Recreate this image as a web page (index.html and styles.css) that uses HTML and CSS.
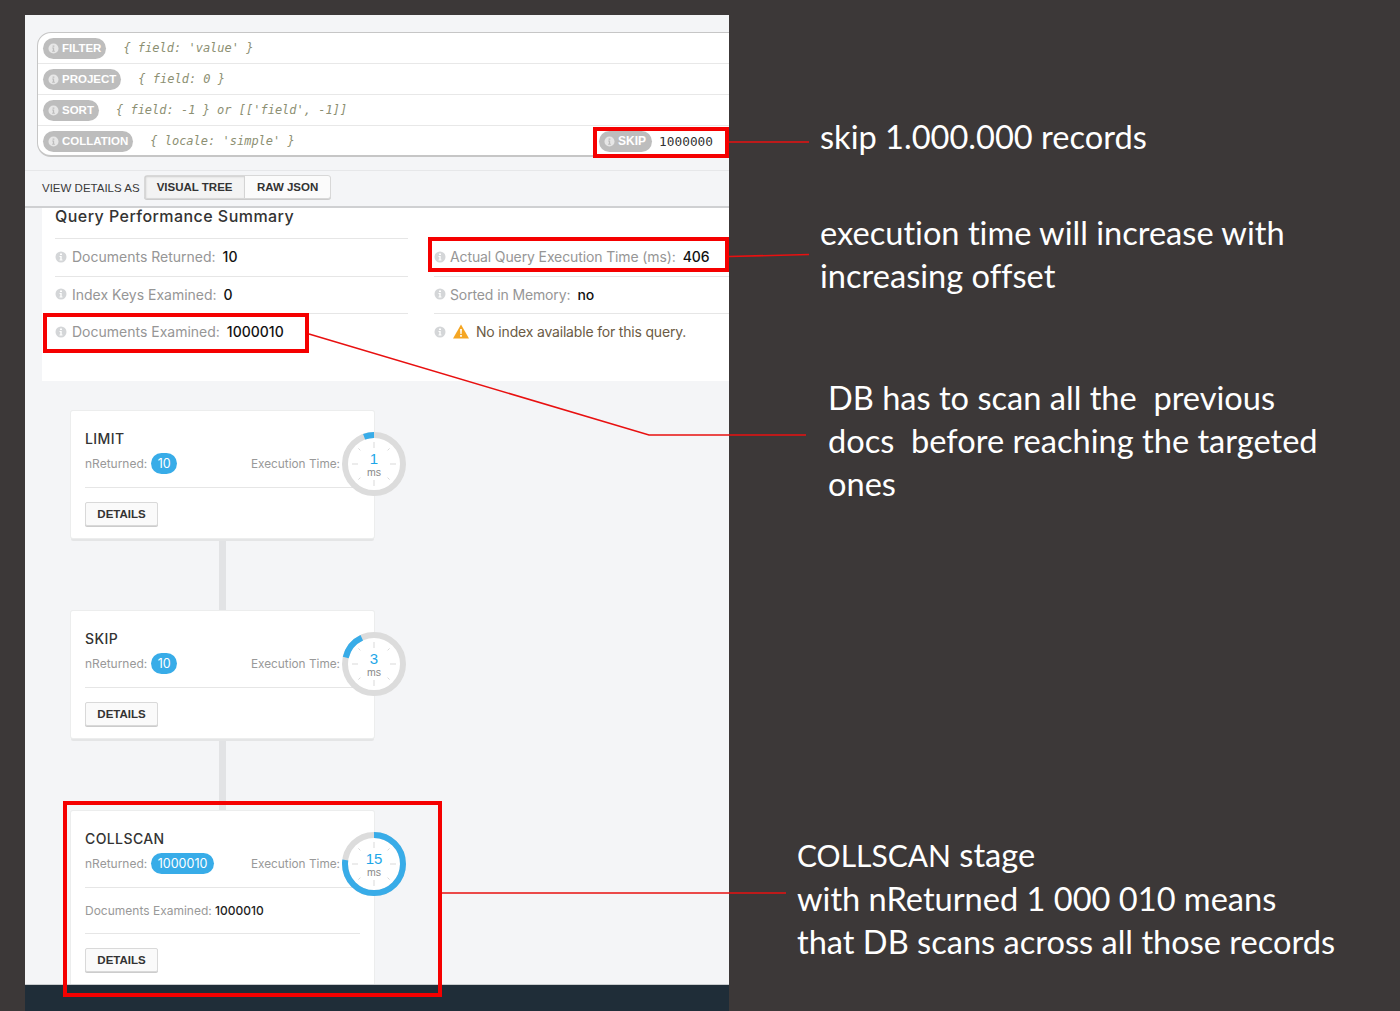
FILE: index.html
```html
<!DOCTYPE html>
<html lang="en">
<head>
<meta charset="utf-8">
<title>Query explain plan</title>
<link rel="stylesheet" href="styles.css">
</head>
<body>
<svg class="defs" width="0" height="0" aria-hidden="true">
  <symbol id="info" viewBox="0 0 12 12">
    <path fill-rule="evenodd" d="M6 .5a5.500 5.500 0 1 1 0 11a5.500 5.500 0 0 1 0-11zM5 2.600v1.500h2V2.600zM4.500 5v1h.8v2.500h-.8v1h3v-1h-.8V5z"/>
  </symbol>
</svg>
<main class="panel">
  <section class="query">
    <div class="qrow"><span class="pill"><svg class="ico"><use href="#info"/></svg>FILTER</span><code class="code">{ field: 'value' }</code></div>
    <div class="qrow"><span class="pill"><svg class="ico"><use href="#info"/></svg>PROJECT</span><code class="code">{ field: 0 }</code></div>
    <div class="qrow"><span class="pill"><svg class="ico"><use href="#info"/></svg>SORT</span><code class="code">{ field: -1 } or [['field', -1]]</code></div>
    <div class="qrow"><span class="pill"><svg class="ico"><use href="#info"/></svg>COLLATION</span><code class="code">{ locale: 'simple' }</code>
      <span class="skip"><span class="pill"><svg class="ico"><use href="#info"/></svg>SKIP</span><code class="skipval">1000000</code></span>
    </div>
  </section>
  <section class="viewbar">
    <span class="viewlabel">VIEW DETAILS AS</span>
    <div class="btngroup"><span class="vbtn active">VISUAL TREE</span><span class="vbtn">RAW JSON</span></div>
  </section>
  <section class="summary">
    <h2 class="sumtitle">Query Performance Summary</h2>
    <div class="sumgrid">
      <div class="sumcol leftcol">
        <div class="stat"><svg class="sico"><use href="#info"/></svg><span class="slabel">Documents Returned:</span><b class="sval">10</b></div>
        <div class="stat"><svg class="sico"><use href="#info"/></svg><span class="slabel">Index Keys Examined:</span><b class="sval">0</b></div>
        <div class="stat"><svg class="sico"><use href="#info"/></svg><span class="slabel">Documents Examined:</span><b class="sval">1000010</b></div>
      </div>
      <div class="sumcol rightcol">
        <div class="stat"><svg class="sico"><use href="#info"/></svg><span class="slabel">Actual Query Execution Time (ms):</span><b class="sval">406</b></div>
        <div class="stat"><svg class="sico"><use href="#info"/></svg><span class="slabel">Sorted in Memory:</span><b class="sval">no</b></div>
        <div class="stat"><svg class="sico"><use href="#info"/></svg>
          <svg class="warn" viewBox="0 0 16 15"><path fill="#f5a623" d="M8 .5 16 14.500H0z"/><path fill="#fff" d="M7.100 5h1.800l-.3 5H7.400zM7.100 11h1.800v1.800H7.100z"/></svg>
          <span class="notice">No index available for this query.</span></div>
      </div>
    </div>
  </section>
  <section class="tree">
    <article class="card">
      <h3 class="ctitle">LIMIT</h3>
      <div class="cmeta"><span class="clabel">nReturned:</span><span class="badge">10</span><span class="clabel etime">Execution Time:</span></div>
      <div class="cfoot"><span class="dbtn">DETAILS</span></div>
      <div class="gauge">
        <svg viewBox="0 0 66 66" width="66" height="66">
          <circle class="gbase" cx="33" cy="33" r="29"/>
          <circle class="garc" cx="33" cy="33" r="29" pathLength="360" stroke-dasharray="20 340" stroke-dashoffset="20" transform="rotate(-90 33 33)"/>
          <path class="gticks" d="M33 11v6M33 49v6M11 33h6M49 33h6M17.400 17.400l2 2M48.600 17.400l-2 2M17.400 48.600l2-2M48.600 48.600l-2-2"/>
        </svg>
        <div class="gtext"><span class="gnum">1</span><span class="gunit">ms</span></div>
      </div>
    </article>
    <div class="link"></div>
    <article class="card">
      <h3 class="ctitle">SKIP</h3>
      <div class="cmeta"><span class="clabel">nReturned:</span><span class="badge">10</span><span class="clabel etime">Execution Time:</span></div>
      <div class="cfoot"><span class="dbtn">DETAILS</span></div>
      <div class="gauge">
        <svg viewBox="0 0 66 66" width="66" height="66">
          <circle class="gbase" cx="33" cy="33" r="29"/>
          <circle class="garc" cx="33" cy="33" r="29" pathLength="360" stroke-dasharray="52 308" stroke-dashoffset="-283" transform="rotate(-90 33 33)"/>
          <path class="gticks" d="M33 11v6M33 49v6M11 33h6M49 33h6M17.400 17.400l2 2M48.600 17.400l-2 2M17.400 48.600l2-2M48.600 48.600l-2-2"/>
        </svg>
        <div class="gtext"><span class="gnum">3</span><span class="gunit">ms</span></div>
      </div>
    </article>
    <div class="link"></div>
    <article class="card lastcard">
      <h3 class="ctitle">COLLSCAN</h3>
      <div class="cmeta"><span class="clabel">nReturned:</span><span class="badge">1000010</span><span class="clabel etime">Execution Time:</span></div>
      <div class="cextra"><span class="clabel">Documents Examined:</span> <b class="cval">1000010</b></div>
      <div class="cfoot"><span class="dbtn">DETAILS</span></div>
      <div class="gauge">
        <svg viewBox="0 0 66 66" width="66" height="66">
          <circle class="gbase" cx="33" cy="33" r="29"/>
          <circle class="garc" cx="33" cy="33" r="29" pathLength="360" stroke-dasharray="278 82" transform="rotate(-90 33 33)"/>
          <path class="gticks" d="M33 11v6M33 49v6M11 33h6M49 33h6M17.400 17.400l2 2M48.600 17.400l-2 2M17.400 48.600l2-2M48.600 48.600l-2-2"/>
        </svg>
        <div class="gtext"><span class="gnum">15</span><span class="gunit">ms</span></div>
      </div>
    </article>
  </section>
  <footer class="pfoot"></footer>
</main>

<div class="mark mark-skip"></div>
<div class="mark mark-time"></div>
<div class="mark mark-docs"></div>
<div class="mark mark-scan"></div>
<svg class="leaders" width="1400" height="1011" viewBox="0 0 1400 1011" aria-hidden="true">
  <path d="M729 142H809M729 256.500L809 254.500M309 334L649 435H806M442 893H786"/>
</svg>
<p class="note note-a">skip 1.000.000 records</p>
<p class="note note-b">execution time will increase with<br>increasing offset</p>
<p class="note note-c">DB has to scan all the&nbsp; previous<br>docs&nbsp; before reaching the targeted<br>ones</p>
<p class="note note-d"><span class="caps">COLLSCAN</span> stage<br>with nReturned 1 000 010 means<br>that DB scans across all those records</p>
</body>
</html>
```
FILE: styles.css
```css
* { box-sizing: border-box; }
html, body { margin: 0; height: 1011px; overflow: hidden; }
body {
  background: #3c3838;
  padding: 15px 0 0 25px;
  font-family: Inter, "Liberation Sans", sans-serif;
  position: relative;
}
.defs { position: absolute; }
.panel {
  width: 704px;
  height: 996px;
  background: #f4f5f7;
  display: flex;
  flex-direction: column;
  overflow: hidden;
}

/* query bar */
.query {
  flex: none;
  width: 730px;
  height: 125px;
  margin: 17px 0 0 12px;
  background: #fff;
  border: 1px solid #c6c6c6;
  border-bottom-width: 2px;
  border-radius: 14px;
}
.qrow {
  height: 31px;
  display: flex;
  align-items: center;
  padding-left: 5px;
  border-bottom: 1px solid #e8e8e8;
}
.qrow:last-child { border-bottom: 0; padding-bottom: 1px; }
.pill {
  display: inline-flex;
  align-items: center;
  height: 21px;
  padding: 0 5px;
  border-radius: 11px;
  background: #bdbdbd;
  color: #fff;
  font-family: "Liberation Sans", sans-serif;
  font-size: 11.500px;
  font-weight: 700;
}
.ico { width: 11px; height: 11px; margin-right: 3px; fill: #e6e6e6; }
.code {
  margin-left: 17px;
  font: italic 12px "DejaVu Sans Mono", monospace;
  color: #8c8f72;
}
.skip {
  margin-left: auto;
  margin-right: 53px;
  display: flex;
  align-items: center;
  gap: 7px;
}
.skip .pill { font-size: 12px; padding: 0 6px 0 5px; }
.skipval { font: 12.800px "DejaVu Sans Mono", monospace; color: #333; }

/* view toggle */
.viewbar {
  flex: none;
  height: 38px;
  margin-top: 13px;
  padding-left: 17px;
  display: flex;
  align-items: center;
  gap: 4px;
  border-top: 1px solid #e6e7e9;
  border-bottom: 2px solid #cfd0d2;
}
.viewlabel { margin-top: -2px; font: 11.500px "Liberation Sans", sans-serif; color: #3a3a3a; }
.btngroup { display: flex; height: 24px; margin-top: -3px; border: 1px solid #d8d8d8; border-radius: 3px; background: #fbfbfb; box-shadow: 0 1px 0 #ccc; }
.vbtn {
  display: flex;
  align-items: center;
  justify-content: center;
  width: 85px;
  padding-left: 1px;
  color: #333;
  font: 700 11.500px "Liberation Sans", sans-serif;
}
.vbtn.active { width: 100px; background: #f3f3f3; border-right: 1px solid #d4d4d4; box-shadow: inset 1px 1px 2px #ccc; }

/* summary */
.summary {
  flex: none;
  height: 173px;
  margin-left: 17px;
  padding-left: 13px;
  background: #fff;
}
.sumtitle {
  margin: 0;
  height: 30px;
  font-size: 16px;
  font-weight: 500;
  line-height: 16px;
  letter-spacing: .45px;
  color: #333;
}
.sumgrid { display: grid; grid-template-columns: 353px 1fr; column-gap: 26px; }
.stat {
  height: 37.500px;
  padding-bottom: 1px;
  display: flex;
  align-items: center;
  border-top: 1px solid #e6e6e6;
  font-size: 14px;
  white-space: nowrap;
}
.sico { width: 12px; height: 12px; margin-right: 5px; fill: #d4d6d8; flex: none; }
.slabel { color: #969696; }
.sval { margin-left: 7px; font-weight: 500; color: #111; }
.rightcol .sico { margin-right: 4px; }
.rightcol .slabel { letter-spacing: -.12px; }
.notice { letter-spacing: -.18px; }
.warn { width: 16px; height: 15px; margin: 0 7px 0 3px; }
.notice { color: #6b5b45; }

/* stage tree */
.tree {
  flex: 1;
  min-height: 0;
  padding: 30px 0 0 46px;
  overflow: hidden;
}
.card {
  position: relative;
  width: 303px;
  height: 127px;
  padding: 18px 14px 0;
  background: #fff;
  border-radius: 2px;
  box-shadow: 0 0 0 1px #eceded, 0 3px 0 #e4e5e6;
}
.lastcard { height: 190px; }
.ctitle { margin: 0; font-size: 14px; font-weight: 500; line-height: 20px; letter-spacing: .4px; color: #333; }
.cmeta { display: flex; align-items: center; height: 26px; margin-top: 2px; padding-bottom: 1px; }
.clabel { font-size: 12px; color: #999; }
.badge {
  margin-left: 4px;
  padding: 0 6.500px;
  height: 21px;
  line-height: 21px;
  border-radius: 11px;
  background: #38ace8;
  color: #fff;
  font-size: 12.500px;
}
.etime { margin-left: auto; margin-right: 20px; font-size: 11.800px; }
.cfoot { margin-top: 10px; padding-top: 14px; border-top: 1px solid #e6e6e6; }
.cextra { margin-top: 10px; height: 46px; padding-top: 15px; border-top: 1px solid #e6e6e6; font-size: 12px; }
.cextra + .cfoot { margin-top: 0; }
.cval { font-weight: 500; color: #222; }
.dbtn {
  display: inline-flex;
  align-items: center;
  justify-content: center;
  width: 73px;
  height: 24px;
  border: 1px solid #d9d9d9;
  border-radius: 2px;
  box-shadow: 0 1px 0 #ccc;
  background: #fafafa;
  color: #333;
  font: 700 11.500px "Liberation Sans", sans-serif;
}
.link { width: 7px; height: 73px; margin-left: 148px; background: #e2e3e5; }
.gauge { position: absolute; left: 270px; top: 20px; width: 66px; height: 66px; }
.gauge svg { display: block; }
.gbase { fill: #fff; stroke: #dcdcdc; stroke-width: 6; }
.garc { fill: none; stroke: #38ace8; stroke-width: 6; }
.gticks { stroke: #d9d9d9; stroke-width: 1; fill: none; }
.gtext {
  position: absolute;
  inset: 0;
  padding-top: 1px;
  display: flex;
  flex-direction: column;
  align-items: center;
  justify-content: center;
  font-family: "Liberation Sans", sans-serif;
}
.gnum { font-size: 15px; line-height: 16px; color: #1ea7e8; }
.gunit { font-size: 10.500px; line-height: 11px; color: #888; }
.pfoot { flex: none; height: 27px; background: #1f2d38; border-top: 1px solid #c9ccce; position: relative; }

/* annotations placed on the free canvas */
.mark { position: absolute; border: 4px solid #f50000; }
.mark-skip { left: 593px; top: 127px; width: 136px; height: 31px; }
.mark-time { left: 428px; top: 237px; width: 301px; height: 35px; }
.mark-docs { left: 43px; top: 313px; width: 266px; height: 40px; }
.mark-scan { left: 63px; top: 801px; width: 379px; height: 196px; }
.leaders { position: absolute; left: 0; top: 0; }
.leaders path { fill: none; stroke: #e81010; stroke-width: 1.500; }
.note {
  position: absolute;
  margin: 0;
  color: #fff;
  font-family: Lato, "Noto Sans", sans-serif;
  font-size: 32.600px;
  font-variant-ligatures: none;
  line-height: 43px;
  white-space: nowrap;
}
.caps { font-size: 30px; }
.note-a { left: 820px; top: 115px; }
.note-b { left: 820px; top: 211px; }
.note-c { left: 828px; top: 376px; }
.note-d { left: 797px; top: 833px; }
```
